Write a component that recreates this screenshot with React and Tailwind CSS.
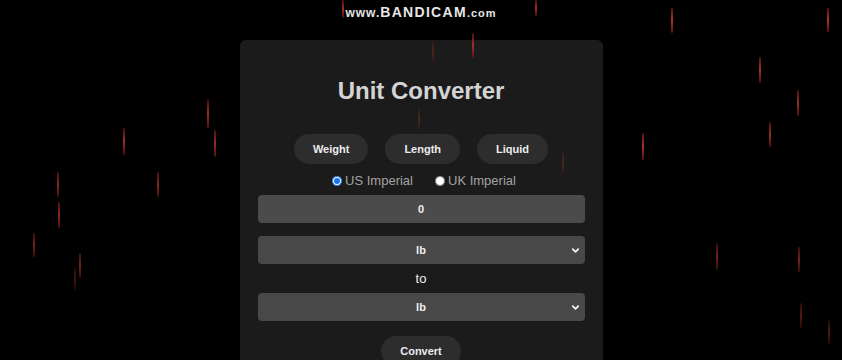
import React, { useState } from "react";
import { FiChevronDown } from "react-icons/fi";

// rain streaks: [left, top, height, opacity]
const drops = [
  [342, 0, 18, 0.8],
  [535, 0, 16, 0.8],
  [671, 8, 25, 0.9],
  [827, 8, 24, 0.9],
  [472, 33, 25, 0.8],
  [432, 40, 22, 0.3],
  [759, 57, 26, 0.85],
  [797, 90, 26, 0.8],
  [207, 100, 28, 0.8],
  [418, 108, 22, 0.3],
  [769, 122, 25, 0.8],
  [123, 128, 27, 0.8],
  [214, 130, 27, 0.8],
  [642, 133, 27, 0.9],
  [562, 150, 24, 0.3],
  [57, 172, 25, 0.7],
  [157, 172, 25, 0.7],
  [58, 202, 26, 0.75],
  [33, 233, 24, 0.6],
  [716, 243, 27, 0.6],
  [798, 247, 25, 0.6],
  [79, 253, 25, 0.6],
  [74, 267, 23, 0.35],
  [800, 303, 25, 0.45],
  [828, 320, 25, 0.4],
];

const App = () => {
  const [tab, setTab] = useState("Weight");
  const [system, setSystem] = useState("us");
  const [value, setValue] = useState("0");
  const [from, setFrom] = useState("lb");
  const [to, setTo] = useState("lb");

  return (
    <div className="relative h-[360px] w-full overflow-hidden bg-black font-['Liberation_Sans',Arial,sans-serif]">
      {/* RAIN */}
      {drops.map((d, i) => (
        <span
          key={i}
          className="absolute w-[2px] rounded-full bg-gradient-to-b from-[#5a1410] via-[#c0392b] to-[#5a1410] z-20 pointer-events-none"
          style={{ left: d[0], top: d[1], height: d[2], opacity: d[3] }}
        />
      ))}

      {/* WATERMARK */}
      <div className="absolute top-[2px] left-0 right-0 flex items-baseline justify-center text-[#e6e6e6] font-bold z-30">
        <span className="text-[12px] tracking-[1px]">www.</span>
        <span className="text-[14px] tracking-[1.3px]">BANDICAM</span>
        <span className="text-[11px] tracking-[1px]">.com</span>
      </div>

      {/* CARD */}
      <div className="flex justify-center pt-[40px]">
        <div className="w-[363px] bg-[#1b1b1b] rounded-[6px] px-[18px] pt-[37px] pb-[24px] flex flex-col items-center">
          <h1 className="text-[24px] font-bold text-[#d4d4d4] leading-[28px]">
            Unit Converter
          </h1>

          {/* TABS */}
          <div className="flex gap-[17px] mt-[29px]">
            {["Weight", "Length", "Liquid"].map((t) => (
              <button
                key={t}
                onClick={() => setTab(t)}
                className="h-[30px] px-[19px] rounded-full bg-[#2d2d2d] text-[11px] font-bold text-[#ececec]"
              >
                {t}
              </button>
            ))}
          </div>

          {/* RADIOS */}
          <div className="flex items-center gap-[22px] mt-[10px] pl-[6px] h-[14px] text-[13px] text-[#a3a3a3]">
            <label className="flex items-center gap-[3px]">
              <input
                type="radio"
                name="system"
                checked={system === "us"}
                onChange={() => setSystem("us")}
                className="w-[10px] h-[10px] m-0 accent-[#1a73e8]"
              />
              US Imperial
            </label>
            <label className="flex items-center gap-[3px]">
              <input
                type="radio"
                name="system"
                checked={system === "uk"}
                onChange={() => setSystem("uk")}
                className="w-[10px] h-[10px] m-0 accent-[#1a73e8]"
              />
              UK Imperial
            </label>
          </div>

          {/* VALUE */}
          <input
            type="text"
            value={value}
            onChange={(e) => setValue(e.target.value)}
            className="mt-[7px] w-full h-[28px] rounded-[4px] bg-[#4b4b4b] text-center text-[11px] font-bold text-[#f0f0f0] outline-none"
          />

          {/* FROM */}
          <div className="relative w-full mt-[13px]">
            <select
              value={from}
              onChange={(e) => setFrom(e.target.value)}
              className="appearance-none w-full h-[28px] rounded-[4px] bg-[#484848] text-center [text-align-last:center] text-[11px] font-bold text-[#f0f0f0] outline-none"
            >
              <option value="lb">lb</option>
              <option value="oz">oz</option>
              <option value="kg">kg</option>
              <option value="g">g</option>
            </select>
            <FiChevronDown className="absolute right-[4px] top-[9px] w-[11px] h-[11px] text-[#f0f0f0] stroke-[4] pointer-events-none" />
          </div>

          <div className="mt-[7px] text-[13px] text-[#f0f0f0] leading-[16px]">to</div>

          {/* TO */}
          <div className="relative w-full mt-[6px]">
            <select
              value={to}
              onChange={(e) => setTo(e.target.value)}
              className="appearance-none w-full h-[28px] rounded-[4px] bg-[#484848] text-center [text-align-last:center] text-[11px] font-bold text-[#f0f0f0] outline-none"
            >
              <option value="lb">lb</option>
              <option value="oz">oz</option>
              <option value="kg">kg</option>
              <option value="g">g</option>
            </select>
            <FiChevronDown className="absolute right-[4px] top-[9px] w-[11px] h-[11px] text-[#f0f0f0] stroke-[4] pointer-events-none" />
          </div>

          {/* BUTTON */}
          <button className="mt-[15px] h-[30px] px-[19px] rounded-full bg-[#2d2d2d] text-[11px] font-bold text-[#ececec]">
            Convert
          </button>
        </div>
      </div>
    </div>
  );
};

export default App;
